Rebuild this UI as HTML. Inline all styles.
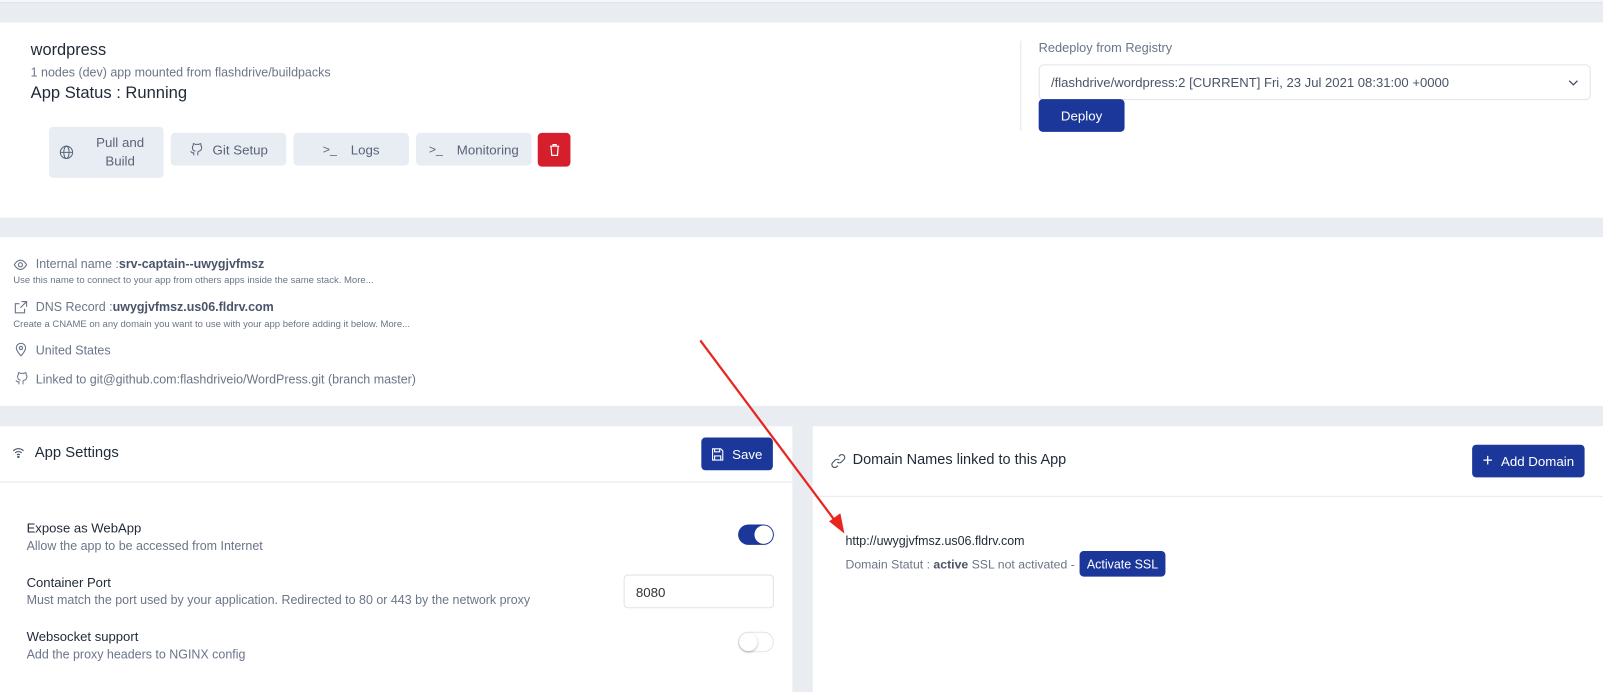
<!DOCTYPE html>
<html><head><meta charset="utf-8"><style>
*{box-sizing:border-box;margin:0;padding:0}
html,body{width:1603px;height:683px;overflow:hidden;background:#e9edf2}
#w{position:absolute;left:0;top:0;width:1568px;height:668px;transform:scale(1.02232);transform-origin:0 0;font-family:"Liberation Sans",sans-serif;color:#1f2937}
.abs{position:absolute}
.card{position:absolute;background:#fff}
.btn{position:absolute;background:#e8edf3;border-radius:4px;color:#5a6478;font-size:13px;display:flex;align-items:center;justify-content:center;gap:10px}
.pb{position:absolute;background:#1b3799;color:#fff;border-radius:4px;font-size:13px;display:flex;align-items:center;justify-content:center;gap:8px}
.g{color:#6b7588}
svg{display:block}
</style></head><body><div id="w">
<div class="abs" style="left:0;top:0;width:1568px;height:3px;background:#f6f7f9;border-bottom:1px solid #dde2e8"></div>
<div class="card" style="left:0;top:22px;width:1568px;height:191px">
  <div class="abs" style="left:30px;top:19px;font-size:16px;color:#1f2937">wordpress</div>
  <div class="abs g" style="left:30px;top:42px;font-size:12.2px">1 nodes (dev) app mounted from flashdrive/buildpacks</div>
  <div class="abs" style="left:30px;top:60px;font-size:16.2px;color:#1f2937">App Status : Running</div>
  <div class="btn" style="left:48px;top:102px;width:112px;height:50px;justify-content:flex-start;padding-left:10px">
    <svg width="14" height="14" viewBox="0 0 14 14" fill="none" stroke="#5a6478" stroke-width="1"><circle cx="7" cy="7" r="6"/><ellipse cx="7" cy="7" rx="2.6" ry="6"/><path d="M1 7h12"/></svg>
    <span style="text-align:center;line-height:18px;margin-left:12px">Pull and<br>Build</span></div>
  <div class="btn" style="left:167px;top:108px;width:113px;height:32px"><svg width="13" height="14" viewBox="0 0 13 14" fill="none" stroke="#5a6478" stroke-width="1"><path d="M4.5 13v-2.5c-2 .5-2.5-1-3-1.5M8.5 13v-2.5c0-1 .3-1.3.8-1.6 2-.3 3-1.2 3-3.5 0-.8-.3-1.5-.8-2 .1-.6.1-1.3-.1-1.9 0 0-.7-.2-2 .8a6 6 0 0 0-3.3 0C4.8 1.3 4.1 1.5 4.1 1.5c-.2.6-.2 1.3-.1 1.9-.5.5-.8 1.2-.8 2 0 2.3 1 3.2 3 3.5"/></svg>Git Setup</div>
  <div class="btn" style="left:287px;top:108px;width:113px;height:32px"><span style="font-size:12px">&gt;_</span>&nbsp;Logs</div>
  <div class="btn" style="left:407px;top:108px;width:113px;height:32px"><span style="font-size:12px">&gt;_</span>&nbsp;Monitoring</div>
  <div class="abs" style="left:526px;top:108px;width:32px;height:33px;background:#d61f2c;border-radius:4px;display:flex;align-items:center;justify-content:center"><svg width="11" height="13" viewBox="0 0 11 13" fill="none" stroke="#fff" stroke-width="1.2"><path d="M1 3h9M4 3V1.5h3V3M2 3l.7 9h5.6L9 3"/></svg></div>
  <div class="abs" style="left:998px;top:18px;width:1px;height:88px;background:#e5e8ec"></div>
  <div class="abs g" style="left:1016px;top:18px;font-size:12.5px">Redeploy from Registry</div>
  <div class="abs" style="left:1016px;top:41px;width:540px;height:35px;border:1px solid #dfe3e9;border-radius:5px;font-size:12.8px;color:#4a5468;padding:9px 11px">/flashdrive/wordpress:2 [CURRENT] Fri, 23 Jul 2021 08:31:00 +0000
    <svg class="abs" style="right:11px;top:14px" width="10" height="6" viewBox="0 0 10 6" fill="none" stroke="#4a5468" stroke-width="1.3"><path d="M1 1l4 4 4-4"/></svg></div>
  <div class="pb" style="left:1016px;top:75px;width:84px;height:32px">Deploy</div>
</div>
<div class="card" style="left:0;top:232px;width:1568px;height:165px;font-size:12.2px">
  <svg class="abs" style="left:13px;top:21px" width="14" height="12" viewBox="0 0 14 12" fill="none" stroke="#6b7588" stroke-width="1.1"><path d="M1 6s2.3-4.5 6-4.5S13 6 13 6s-2.3 4.5-6 4.5S1 6 1 6z"/><circle cx="7" cy="6" r="2"/></svg>
  <div class="abs g" style="left:35px;top:19px">Internal name :<b style="color:#4a5468">srv-captain--uwygjvfmsz</b></div>
  <div class="abs g" style="left:13px;top:37px;font-size:9.3px">Use this name to connect to your app from others apps inside the same stack. More...</div>
  <svg class="abs" style="left:14px;top:62px" width="13" height="13" viewBox="0 0 13 13" fill="none" stroke="#6b7588" stroke-width="1.1"><path d="M7 1h5v5M12 1L6 7M10 8v4H1V3h4"/></svg>
  <div class="abs g" style="left:35px;top:61px">DNS Record :<b style="color:#4a5468">uwygjvfmsz.us06.fldrv.com</b></div>
  <div class="abs g" style="left:13px;top:80px;font-size:9.3px">Create a CNAME on any domain you want to use with your app before adding it below. More...</div>
  <svg class="abs" style="left:15px;top:103px" width="11" height="14" viewBox="0 0 11 14" fill="none" stroke="#6b7588" stroke-width="1.1"><path d="M5.5 13S1 8.5 1 5.3a4.5 4.5 0 0 1 9 0C10 8.5 5.5 13 5.5 13z"/><circle cx="5.5" cy="5.3" r="1.6"/></svg>
  <div class="abs g" style="left:35px;top:104px">United States</div>
  <svg class="abs" style="left:14px;top:131px" width="13" height="14" viewBox="0 0 13 14" fill="none" stroke="#6b7588" stroke-width="1"><path d="M4.5 13v-2.5c-2 .5-2.5-1-3-1.5M8.5 13v-2.5c0-1 .3-1.3.8-1.6 2-.3 3-1.2 3-3.5 0-.8-.3-1.5-.8-2 .1-.6.1-1.3-.1-1.9 0 0-.7-.2-2 .8a6 6 0 0 0-3.3 0C4.8 1.3 4.1 1.5 4.1 1.5c-.2.6-.2 1.3-.1 1.9-.5.5-.8 1.2-.8 2 0 2.3 1 3.2 3 3.5"/></svg>
  <div class="abs g" style="left:35px;top:132px">Linked to git@github.com:flashdriveio/WordPress.git (branch master)</div>
</div>
<div class="card" style="left:0;top:417px;width:775px;height:260px">
  <svg class="abs" style="left:12px;top:20px" width="12" height="11" viewBox="0 0 12 11" fill="none" stroke="#4a5468" stroke-width="1.1"><path d="M1 4a7 7 0 0 1 10 0M2.8 6a4.5 4.5 0 0 1 6.4 0M4.6 8a2 2 0 0 1 2.8 0"/><circle cx="6" cy="10" r=".6" fill="#4a5468"/></svg>
  <div class="abs" style="left:34px;top:18px;font-size:14.5px;color:#1f2937">App Settings</div>
  <div class="pb" style="left:686px;top:11px;width:70px;height:32px"><svg width="12" height="13" viewBox="0 0 12 13" fill="none" stroke="#fff" stroke-width="1.1"><path d="M1 1h8l2 2v9H1z M3 1v3h5V1 M3 12V8h6v4"/></svg>Save</div>
  <div class="abs" style="left:0;top:54px;width:775px;height:1px;background:#e5e9ef"></div>
  <div class="abs" style="left:26px;top:92px;font-size:12.8px">Expose as WebApp</div>
  <div class="abs g" style="left:26px;top:110px;font-size:12.2px">Allow the app to be accessed from Internet</div>
  <div class="abs" style="left:722px;top:96px;width:35px;height:20px;border-radius:10px;background:#1b3799"><div class="abs" style="right:1px;top:1px;width:18px;height:18px;border-radius:50%;background:#fff"></div></div>
  <div class="abs" style="left:26px;top:145px;font-size:12.8px">Container Port</div>
  <div class="abs g" style="left:26px;top:163px;font-size:12.2px">Must match the port used by your application. Redirected to 80 or 443 by the network proxy</div>
  <div class="abs" style="left:610px;top:145px;width:147px;height:33px;border:1px solid #dfe3e9;border-radius:4px;font-size:13px;padding:9px 11px;color:#333">8080</div>
  <div class="abs" style="left:26px;top:198px;font-size:12.8px">Websocket support</div>
  <div class="abs g" style="left:26px;top:216px;font-size:12.2px">Add the proxy headers to NGINX config</div>
  <div class="abs" style="left:722px;top:201px;width:35px;height:20px;border-radius:10px;background:#fff;border:1px solid #e2e6eb"><div class="abs" style="left:0;top:0;width:18px;height:18px;border-radius:50%;background:#fff;box-shadow:0 1px 2px rgba(0,0,0,.3)"></div></div>
</div>
<div class="card" style="left:795px;top:417px;width:773px;height:260px">
  <svg class="abs" style="left:18px;top:27px" width="14" height="14" viewBox="0 0 14 14" fill="none" stroke="#4a5468" stroke-width="1.1"><path d="M6 8a3 3 0 0 0 4 0l2.5-2.5a2.8 2.8 0 0 0-4-4L7.5 2.5M8 6a3 3 0 0 0-4 0L1.5 8.5a2.8 2.8 0 0 0 4 4l1-1"/></svg>
  <div class="abs" style="left:39px;top:25px;font-size:14.2px;color:#1f2937">Domain Names linked to this App</div>
  <div class="pb" style="left:645px;top:18px;width:110px;height:32px"><span style="font-size:17px;font-weight:300">+</span>Add Domain</div>
  <div class="abs" style="left:0;top:68px;width:773px;height:1px;background:#e5e9ef"></div>
  <div class="abs" style="left:32px;top:105px;font-size:12.2px;color:#1f2937">http://uwygjvfmsz.us06.fldrv.com</div>
  <div class="abs g" style="left:32px;top:128px;font-size:12px">Domain Statut : <b style="color:#4a5468">active</b> SSL not activated -</div>
  <div class="pb" style="left:261px;top:122px;width:84px;height:25px;font-size:12.2px">Activate SSL</div>
</div>
<svg class="abs" style="left:0;top:0" width="1568" height="668"><line x1="685" y1="333" x2="818" y2="511" stroke="#e8251f" stroke-width="2.2"/><polygon points="826,522 811,510 822,502" fill="#e8251f"/></svg>
</div></body></html>
